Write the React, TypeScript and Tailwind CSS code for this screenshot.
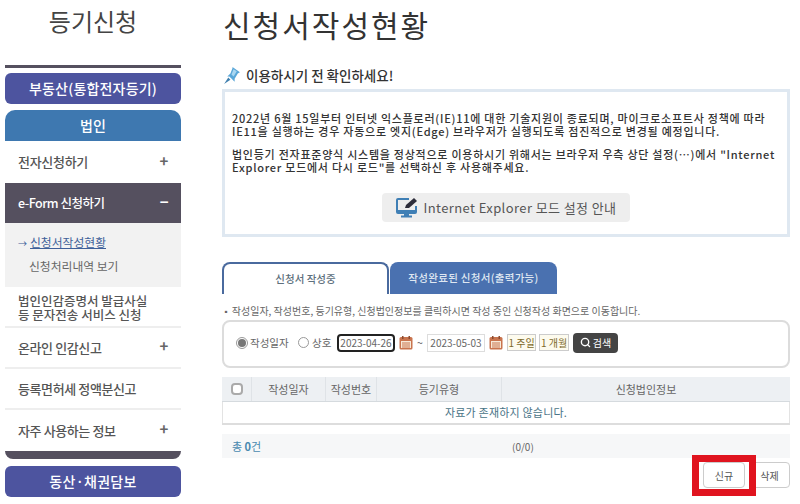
import { Search } from "lucide-react";

const menuItems = [
  { label: "전자신청하기", plus: true },
];

const lowerItems = [
  { label: "온라인 인감신고", plus: true },
  { label: "등록면허세 정액분신고", plus: false },
  { label: "자주 사용하는 정보", plus: true },
];

function Plus() {
  return <span className="text-[15px] font-bold leading-none text-[#666] mb-1">+</span>;
}

function CalendarIcon() {
  return (
    <svg width="14" height="14" viewBox="0 0 14 14" className="shrink-0">
      <rect x="0.5" y="1" width="13" height="12.5" rx="1.5" fill="#c9744e" />
      <rect x="2" y="5" width="10" height="7" fill="#f7ead9" />
      <rect x="3" y="0" width="1.5" height="3" fill="#8a4b30" />
      <rect x="9.5" y="0" width="1.5" height="3" fill="#8a4b30" />
      <path d="M3 7h8M3 9h8M3 11h8" stroke="#c9744e" strokeWidth="1" />
    </svg>
  );
}

function PinIcon() {
  return (
    <svg width="18" height="19" viewBox="0 0 17 18" className="shrink-0">
      <path d="M9 1l7 5-2 1-3 5 0 3-5-5-2 0 3-3 2-5z" fill="#5aa7d8" />
      <path d="M5 11l-4 6 6-4z" fill="#3f7fae" />
      <path d="M10 3l3 2-3 5-2-2z" fill="#a9d6f0" />
    </svg>
  );
}

function MonitorIcon() {
  return (
    <svg width="22" height="21" viewBox="0 0 22 21" className="shrink-0">
      <path d="M13 2H2a1 1 0 0 0-1 1v12a1 1 0 0 0 1 1h17a1 1 0 0 0 1-1V9" fill="none" stroke="#3f7fb5" strokeWidth="2" />
      <rect x="1" y="13" width="19" height="3" fill="#3f7fb5" />
      <rect x="8" y="16" width="5" height="3" fill="#3f7fb5" />
      <rect x="5" y="18.5" width="11" height="2" fill="#3f7fb5" />
      <path d="M9 11l1-3 8-7 3 3-8 7z" fill="#2d2d3a" />
    </svg>
  );
}

export default function App() {
  return (
    <div className="flex w-[800px] h-[504px] overflow-hidden bg-white text-[#555] font-['Noto_Sans_CJK_KR','Noto_Sans',sans-serif]">
      {/* Sidebar */}
      <aside className="ml-[5px] w-[176px] shrink-0 flex flex-col">
        <h2 className="h-[65px] pt-[5px] text-center text-[24px] leading-[32px] text-[#444]">등기신청</h2>
        <div className="h-[3px] bg-[#55505f]" />
        <div className="mt-[5px] h-[31px] rounded-md bg-[#4d549f] text-white text-[14px] tracking-[0.2px] font-medium flex items-center justify-center">
          부동산(통합전자등기)
        </div>
        <div className="mt-[6px] h-[31px] rounded-t-[10px] bg-[#3e78b0] text-white text-[14px] font-medium flex items-center justify-center">
          법인
        </div>
        {menuItems.map((item) => (
          <div key={item.label} className="h-[42px] px-[13px] flex items-center justify-between text-[13px] tracking-[-0.3px] font-medium text-[#555]">
            {item.label}
            {item.plus && <Plus />}
          </div>
        ))}
        <div className="h-[40px] pl-[13px] pr-[13px] bg-[#55505f] text-white flex items-center justify-between text-[12.5px] tracking-[-0.5px] font-medium">
          e-Form 신청하기
          <span className="text-[15px] font-bold leading-none mb-1">−</span>
        </div>
        <div className="h-[64px] bg-[#f2f2f2] pl-[13px] pt-[8px] text-[11.8px] leading-[22px] text-[#666]">
          <div className="text-[#3e5f99]">
            <span className="text-[9px] mr-[3px]">→</span>
            <span className="underline">신청서작성현황</span>
          </div>
          <div className="pl-[11px]">신청처리내역 보기</div>
        </div>
        <div className="h-[41px] px-[13px] pt-[2px] border-b-2 border-[#eee] flex items-center text-[12.5px] leading-[14px] font-medium text-[#555]">
          <span>
            법인인감증명서 발급사실
            <br />
            등 문자전송 서비스 신청
          </span>
        </div>
        {lowerItems.map((item, index) => (
          <div
            key={item.label}
            className={`h-[41px] px-[13px] flex items-center justify-between text-[13px] tracking-[-0.4px] font-medium text-[#555] ${index < 2 ? "border-b-2 border-[#eee]" : ""}`}
          >
            {item.label}
            {item.plus && <Plus />}
          </div>
        ))}
        <div className="h-[8px] rounded-b-lg bg-[#55505f]" />
        <div className="mt-[7px] h-[31px] rounded-md bg-[#4d549f] text-white text-[14px] tracking-[0.3px] font-medium flex items-center justify-center">
          동산·채권담보
        </div>
      </aside>

      {/* Main */}
      <main className="ml-[41px] w-[568px] shrink-0 flex flex-col relative">
        <h1 className="h-[64px] pl-[1px] pt-[4px] text-[30px] leading-[40px] tracking-[2px] text-[#333]">신청서작성현황</h1>
        <div className="h-[22px] flex items-center gap-[5px] pl-[1px] text-[13.5px] font-medium text-[#333]">
          <PinIcon />
          이용하시기 전 확인하세요!
        </div>
        <div className="mt-[3px] h-[148px] border-[3px] border-[#dfe8f1] px-[7px] pt-[20px] text-[11px] leading-[13px] font-medium text-[#333] tracking-[0.75px] whitespace-nowrap">
          <p>
            2022년 6월 15일부터 인터넷 익스플로러(IE)11에 대한 기술지원이 종료되며, 마이크로소프트사 정책에 따라
            <br />
            IE11을 실행하는 경우 자동으로 엣지(Edge) 브라우저가 실행되도록 점진적으로 변경될 예정입니다.
          </p>
          <p className="mt-[10px]">
            법인등기 전자표준양식 시스템을 정상적으로 이용하시기 위해서는 브라우저 우측 상단 설정(…)에서 "Internet
            <br />
            Explorer 모드에서 다시 로드"를 선택하신 후 사용해주세요.
          </p>
          <div className="mt-[19px] ml-[150px] w-[248px] h-[29px] rounded bg-[#eeeeee] flex items-center justify-center gap-[6px] text-[13px] font-normal tracking-[0.4px] text-[#555]">
            <MonitorIcon />
            Internet Explorer 모드 설정 안내
          </div>
        </div>

        {/* Tabs */}
        <div className="mt-[25px] h-[32px] flex gap-[1px] text-[10.5px] font-medium">
          <div className="w-[167px] rounded-t-lg border-2 border-b-0 border-[#4a6a9e] bg-white text-[#5d6f7d] flex items-center justify-center">
            신청서 작성중
          </div>
          <div className="w-[167px] rounded-t-lg bg-[#4a71b0] text-[#dfe7f2] tracking-[0.3px] flex items-center justify-center">
            작성완료된 신청서(출력가능)
          </div>
        </div>
        <p className="mt-[9px] h-[16px] text-[10px] leading-[16px] text-[#666] whitespace-nowrap">
          <span className="text-[8px] align-middle">▪ </span>작성일자, 작성번호, 등기유형, 신청법인정보를 클릭하시면 작성 중인 신청작성 화면으로 이동합니다.
        </p>

        {/* Search */}
        <div className="mt-[1px] h-[48px] rounded-lg border-2 border-[#dcdcdc] pl-[12px] pb-[3px] flex items-center text-[10.5px] text-[#666] whitespace-nowrap">
          <span className="shrink-0 w-[12px] h-[12px] rounded-full border border-[#999] flex items-center justify-center mr-[2px]">
            <span className="w-[8px] h-[8px] rounded-full bg-[#777]" />
          </span>
          <span className="shrink-0 w-[39px] mr-[9px]">작성일자</span>
          <span className="shrink-0 w-[11px] h-[11px] rounded-full border border-[#999] mr-[3px]" />
          <span className="shrink-0 w-[19px] mr-[6px]">상호</span>
          <span className="shrink-0 w-[58px] h-[18px] rounded-sm border-2 border-[#222] text-[10px] flex items-center justify-center mr-[4px]">2023-04-26</span>
          <CalendarIcon />
          <span className="shrink-0 w-[14px] text-center">~</span>
          <span className="shrink-0 w-[58px] h-[18px] border border-[#ddd] text-[10px] flex items-center justify-center mr-[4px]">2023-05-03</span>
          <CalendarIcon />
          <span className="shrink-0 ml-[4px] w-[29px] h-[17px] border border-[#ccc] bg-[#fdfbee] text-[#7d6a2a] text-[10px] flex items-center justify-center">1 주일</span>
          <span className="shrink-0 ml-[3px] w-[30px] h-[17px] border border-[#ccc] bg-[#fdfbee] text-[#7d6a2a] text-[10px] flex items-center justify-center">1 개월</span>
          <span className="shrink-0 ml-[4px] w-[45px] h-[20px] rounded-sm bg-[#444] text-white text-[10px] flex items-center justify-center gap-[2px]">
            <Search size={11} strokeWidth={3} />
            검색
          </span>
        </div>

        {/* Table */}
        <div className="mt-[9px] border-b-2 border-[#ddd] text-[11px]">
          <div className="h-[25px] bg-[#edf0f3] border-b border-[#d5dade] grid grid-cols-[30px_74px_51px_125px_1fr] text-[#666]">
            <div className="flex items-center justify-center border-r border-[#dfe3e7]">
              <span className="w-[12px] h-[12px] rounded-sm border-2 border-[#aaa] bg-white" />
            </div>
            <div className="flex items-center justify-center border-r border-[#dfe3e7]">작성일자</div>
            <div className="flex items-center justify-center border-r border-[#dfe3e7]">작성번호</div>
            <div className="flex items-center justify-center border-r border-[#dfe3e7]">등기유형</div>
            <div className="flex items-center justify-center">신청법인정보</div>
          </div>
          <div className="h-[21px] border-l border-r border-[#e3e3e3] flex items-center justify-center text-[#4a7487] tracking-[0.2px]">
            자료가 존재하지 않습니다.
          </div>
        </div>
        <div className="mt-[9px] h-[24px] bg-[#f6f7f8] pl-[10px] flex items-center text-[11px] text-[#4a8ab0]">
          <span className="w-[280px]">
            총 <b className="font-bold">0</b>건
          </span>
          <span className="text-[10px] text-[#666]">(0/0)</span>
        </div>

        {/* Actions */}
        <div className="mt-[4px] flex justify-end gap-[4px] text-[10px] text-[#555]">
          <span className="w-[42px] h-[26px] rounded border border-[#ccc] flex items-center justify-center">신규</span>
          <span className="w-[41px] h-[26px] rounded border border-[#ccc] flex items-center justify-center">삭제</span>
        </div>
        <div className="absolute left-[470px] top-[455px] w-[64px] h-[41px] border-[7px] border-[#e0141f]" />
      </main>
    </div>
  );
}
